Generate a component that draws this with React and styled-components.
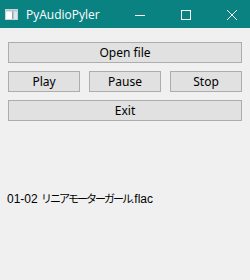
import React from "react";
import styled, { createGlobalStyle } from "styled-components";

const Global = createGlobalStyle`
  html, body { margin: 0; padding: 0; background: #f0f0f0; }
  body { width: 250px; height: 280px; overflow: hidden; }
`;

const Window = styled.div`
  width: 250px;
  height: 280px;
  background: #f0f0f0;
  display: flex;
  flex-direction: column;
  font-family: "Noto Sans", "Noto Sans CJK JP", sans-serif;
`;

const TitleBar = styled.div`
  height: 28px;
  background: #0a8282;
  display: flex;
  align-items: center;
  color: #ffffff;
  flex-shrink: 0;
`;

const AppIcon = styled.svg`
  margin-left: 5px;
  width: 13px;
  height: 11px;
  margin-top: 1px;
`;

const Title = styled.span`
  margin-left: 8px;
  font-family: "Segoe UI", "Open Sans", sans-serif;
  font-size: 12px;
  line-height: 16px;
  margin-top: 1px;
`;

const Controls = styled.div`
  margin-left: auto;
  display: flex;
  height: 100%;
  margin-right: -5px;
`;

const Ctrl = styled.div`
  width: 46px;
  height: 100%;
  display: flex;
  align-items: center;
  justify-content: center;
  svg { display: block; margin-top: 1px; }
`;

const Content = styled.div`
  padding: 14px 8px 0 8px;
  display: flex;
  flex-direction: column;
  gap: 8px;
`;

const Row = styled.div`
  display: grid;
  grid-template-columns: repeat(${(p) => p.cols || 1}, 1fr);
  column-gap: 9px;
`;

const Button = styled.button`
  height: 21px;
  margin: 0;
  padding: 0;
  background: #e1e1e1;
  border: 1px solid #adadad;
  border-radius: 0;
  font-family: "Noto Sans", sans-serif;
  font-size: 12px;
  line-height: 19px;
  color: #000;
`;

const FileLabel = styled.div`
  margin-top: 70px;
  padding-left: 7px;
  font-family: "Liberation Sans", "Noto Sans CJK JP", sans-serif;
  font-size: 12px;
  line-height: 14px;
  color: #000;
  white-space: nowrap;
`;

const Kana = styled.span`
  font-family: "Noto Sans CJK JP", sans-serif;
  font-size: 11px;
  letter-spacing: -2px;
`;

export default function App() {
  return (
    <>
      <Global />
      <Window>
        <TitleBar>
          <AppIcon viewBox="0 0 13 11">
            <rect x="0.5" y="0.5" width="12" height="10" fill="#dfe6ea" stroke="#c9d2d8" />
            <rect x="1" y="1" width="6" height="9" fill="#ffffff" />
            <rect x="7" y="1" width="1.5" height="9" fill="#8fa3b0" />
            <rect x="1" y="1" width="11" height="1.5" fill="#b9c6cf" />
          </AppIcon>
          <Title>PyAudioPyler</Title>
          <Controls>
            <Ctrl>
              <svg width="10" height="10" viewBox="0 0 10 10">
                <line x1="0" y1="5.5" x2="10" y2="5.5" stroke="#fff" strokeWidth="1" />
              </svg>
            </Ctrl>
            <Ctrl>
              <svg width="10" height="10" viewBox="0 0 10 10">
                <rect x="0.5" y="0.5" width="9" height="9" fill="none" stroke="#fff" strokeWidth="1" />
              </svg>
            </Ctrl>
            <Ctrl>
              <svg width="10" height="10" viewBox="0 0 10 10">
                <path d="M0 0 L10 10 M10 0 L0 10" stroke="#fff" strokeWidth="1" />
              </svg>
            </Ctrl>
          </Controls>
        </TitleBar>
        <Content>
          <Row cols={1}>
            <Button>Open file</Button>
          </Row>
          <Row cols={3}>
            <Button>Play</Button>
            <Button>Pause</Button>
            <Button>Stop</Button>
          </Row>
          <Row cols={1}>
            <Button>Exit</Button>
          </Row>
        </Content>
        <FileLabel>
          01-02 <Kana>リニアモーターガール</Kana>.flac
        </FileLabel>
      </Window>
    </>
  );
}
